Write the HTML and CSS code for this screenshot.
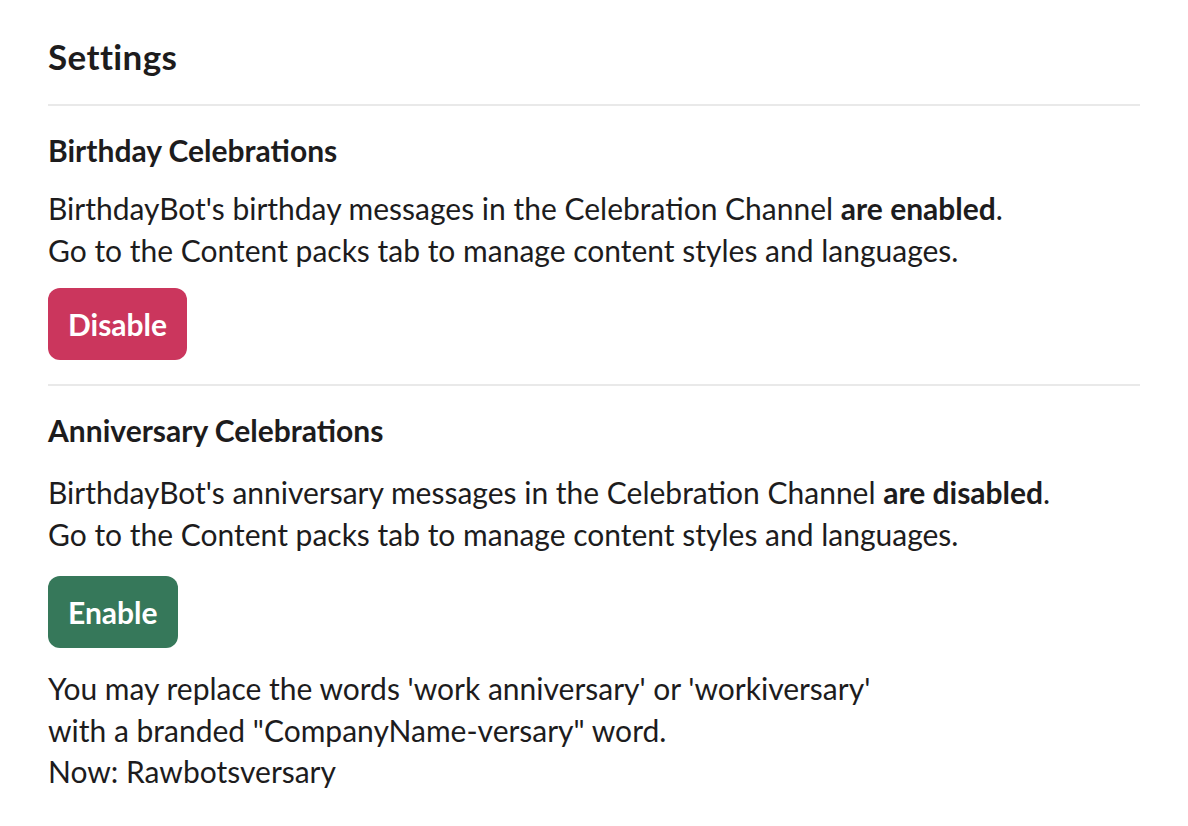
FILE: index.html
```html
<!DOCTYPE html>
<html>
<head>
<meta charset="utf-8">
<link rel="stylesheet" href="styles.css">
</head>
<body>
<div class="page">
  <h1 class="title">Settings</h1>
  <hr class="divider">
  <section class="block">
    <h2 class="block-title">Birthday Celebrations</h2>
    <p class="text">BirthdayBot's birthday messages in the Celebration Channel <b>are enabled</b>.<br>Go to the Content packs tab to manage content styles and languages.</p>
    <button class="btn btn-danger">Disable</button>
  </section>
  <hr class="divider">
  <section class="block block-second">
    <h2 class="block-title">Anniversary Celebrations</h2>
    <p class="text">BirthdayBot's anniversary messages in the Celebration Channel <b>are disabled</b>.<br>Go to the Content packs tab to manage content styles and languages.</p>
    <button class="btn btn-primary">Enable</button>
    <p class="text note">You may replace the words 'work anniversary' or 'workiversary'<br>with a branded "CompanyName-versary" word.<br>Now: Rawbotsversary</p>
  </section>
</div>
</body>
</html>
```
FILE: styles.css
```css
html, body {
  margin: 0;
  padding: 0;
  background: #ffffff;
}
body {
  font-family: Lato, "Noto Sans", sans-serif;
  color: #1d1c1d;
}
.page {
  padding: 36px 48px 0 48px;
  width: 1092px;
}
.title {
  margin: 0;
  font-size: 35px;
  font-weight: 700;
  letter-spacing: 0.4px;
  line-height: 40px;
}
.divider {
  border: 0;
  border-top: 2px solid #e9e9e9;
  margin: 28px 0 0 0;
}
.block + .divider {
  margin-top: 0;
}
.block {
  padding-top: 26px;
  padding-bottom: 24px;
}
.block-title {
  margin: 0;
  font-size: 30px;
  font-weight: 700;
  line-height: 36px;
}
.text {
  margin: 19px 0 0 0;
  font-size: 30px;
  line-height: 42px;
}
.text b {
  font-weight: 700;
}
.btn {
  display: block;
  margin-top: 17px;
  height: 72px;
  border: 0;
  border-radius: 12px;
  padding: 0 20px;
  font-family: Lato, "Noto Sans", sans-serif;
  font-size: 30px;
  font-weight: 700;
  color: #ffffff;
}
.block-second .text {
  margin-top: 23px;
}
.block-second .btn {
  margin-top: 21px;
}
.btn-danger {
  background: #cb365d;
}
.btn-primary {
  background: #36785a;
}
.block-second .note {
  margin-top: 20px;
  line-height: 41.5px;
}
```
